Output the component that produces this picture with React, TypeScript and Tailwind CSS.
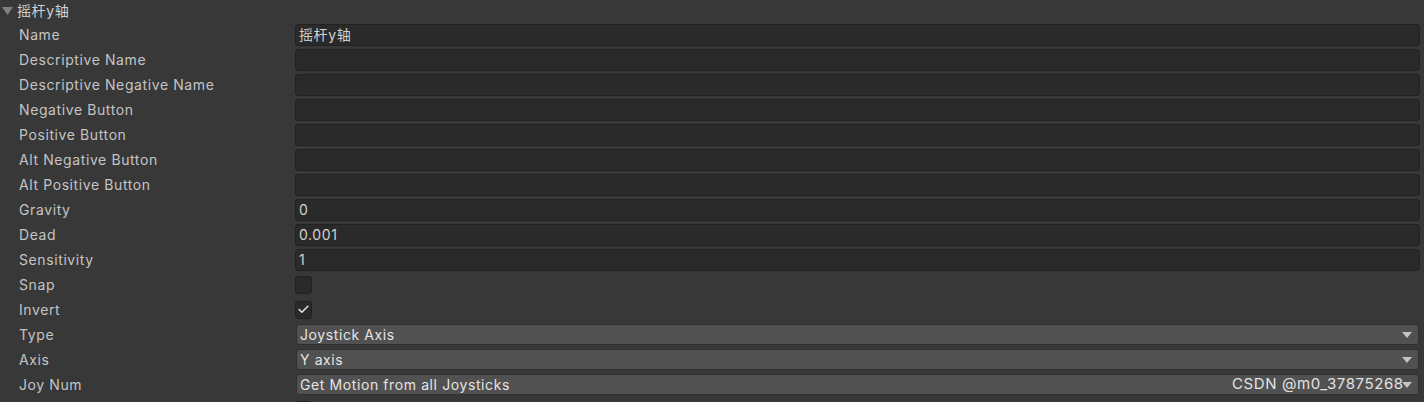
import { Check } from 'lucide-react'

const font = { fontFamily: 'Inter, "Noto Sans CJK SC", sans-serif' }

type Row =
  | { label: string; kind: 'text'; value?: string }
  | { label: string; kind: 'check'; checked: boolean }
  | { label: string; kind: 'select'; value: string }

const rows: Row[] = [
  { label: 'Name', kind: 'text', value: '摇杆y轴' },
  { label: 'Descriptive Name', kind: 'text' },
  { label: 'Descriptive Negative Name', kind: 'text' },
  { label: 'Negative Button', kind: 'text' },
  { label: 'Positive Button', kind: 'text' },
  { label: 'Alt Negative Button', kind: 'text' },
  { label: 'Alt Positive Button', kind: 'text' },
  { label: 'Gravity', kind: 'text', value: '0' },
  { label: 'Dead', kind: 'text', value: '0.001' },
  { label: 'Sensitivity', kind: 'text', value: '1' },
  { label: 'Snap', kind: 'check', checked: false },
  { label: 'Invert', kind: 'check', checked: true },
  { label: 'Type', kind: 'select', value: 'Joystick Axis' },
  { label: 'Axis', kind: 'select', value: 'Y axis' },
  { label: 'Joy Num', kind: 'select', value: 'Get Motion from all Joysticks' },
  { label: '', kind: 'check', checked: false },
]

function Field({ row }: { row: Row }) {
  if (row.kind === 'text') {
    return (
      <div className="h-[22px] flex-1 mr-[4px] rounded-[3px] border border-[#212121] bg-[#2a2a2a] px-[3px] flex items-center text-[14px] text-[#d2d2d2]">
        {row.value}
      </div>
    )
  }
  if (row.kind === 'check') {
    return (
      <div className="w-[17px] h-[18px] rounded-[3px] border border-[#212121] bg-[#2a2a2a] flex items-center justify-center">
        {row.checked && <Check size={13} strokeWidth={3} className="text-[#e0e0e0]" />}
      </div>
    )
  }
  return (
    <div className="h-[21px] flex-1 ml-[1px] mr-[5px] rounded-[3px] border border-[#303030] bg-[#515151] pl-[3px] pr-[6px] flex items-center justify-between text-[14px] text-[#e4e4e4]">
      <span>{row.value}</span>
      <svg width="10" height="6" viewBox="0 0 10 6" className="fill-[#c4c4c4]">
        <path d="M0 0 H10 L5 6 Z" />
      </svg>
    </div>
  )
}

export default function App() {
  return (
    <div
      className="w-[1424px] h-[402px] overflow-hidden bg-[#383838] text-[#c4c4c4] tracking-[0.6px] relative"
      style={font}
    >
      <div className="h-[21px] flex items-center pl-[2px] text-[14px] text-[#d2d2d2]">
        <svg width="11" height="8" viewBox="0 0 11 8" className="fill-[#7f7f7f] mr-[4px] mt-[1px]">
          <path d="M0 0 H11 L5.5 8 Z" />
        </svg>
        <span>摇杆y轴</span>
      </div>
      <div className="pt-[1px]">
        {rows.map((row, i) => (
          <div key={i} className="h-[25px] flex items-center">
            <div className="w-[295px] shrink-0 pl-[19px] text-[14px]">{row.label}</div>
            <Field row={row} />
          </div>
        ))}
      </div>
      <div className="absolute left-[1232px] top-[373px] text-[15px] text-[#e2e2e2]">CSDN @m0_37875268</div>
    </div>
  )
}
